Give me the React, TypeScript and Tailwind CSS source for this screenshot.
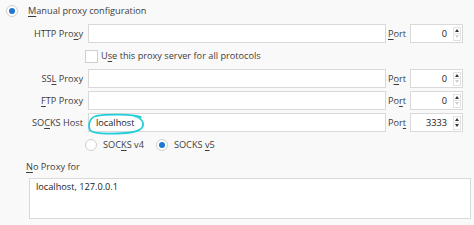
import React from 'react';

const U: React.FC<{ children: React.ReactNode }> = ({ children }) => <span className="underline underline-offset-2">{children}</span>;

const Radio: React.FC<{ checked?: boolean }> = ({ checked }) => (
  <span className="flex h-[12px] w-[12px] shrink-0 items-center justify-center rounded-full border border-[#cfcfcf] bg-white">
    {checked && <span className="h-[6px] w-[6px] rounded-full bg-[#1e78d0]" />}
  </span>
);

const Spinner: React.FC<{ downActive?: boolean }> = ({ downActive }) => (
  <div className="ml-[6px] flex h-[14px] w-[8px] flex-col border border-[#e2e2e2]">
    <div className="flex flex-1 items-center justify-center border-b border-[#e2e2e2]">
      <svg width="4" height="3" viewBox="0 0 4 3"><path d="M2 0L4 3H0z" fill="#333" /></svg>
    </div>
    <div className="flex flex-1 items-center justify-center">
      <svg width="4" height="3" viewBox="0 0 4 3"><path d="M0 0H4L2 3z" fill={downActive ? '#333' : '#cfcfcf'} /></svg>
    </div>
  </div>
);

interface ProxyRowProps {
  label: React.ReactNode;
  port: React.ReactNode;
  value?: string;
  portValue: string;
  downActive?: boolean;
  className?: string;
}

const ProxyRow: React.FC<ProxyRowProps> = ({ label, port, value, portValue, downActive, className }) => (
  <div className={`flex h-[19px] items-center ${className ?? ''}`}>
    <div className="w-[84px] pr-[1px] text-right">{label}</div>
    <div className="ml-[4px] flex h-full w-[298px] items-center border border-[#d9d9d9] bg-white pl-[7px] text-[#222]">
      {value}
    </div>
    <div className="ml-[2px] w-[22px]">{port}</div>
    <div className="flex h-full w-[53px] items-center justify-end border border-[#d9d9d9] bg-white pr-[1px] text-[#222]">
      <span>{portValue}</span>
      <Spinner downActive={downActive} />
    </div>
  </div>
);

export default function App() {
  return (
    <div className="relative h-[225px] w-[474px] overflow-hidden bg-[#f9f9f9] font-['Open_Sans',sans-serif] text-[9.2px] text-[#3d3d3d]">
      <div className="flex h-[22px] items-center pl-[6px]">
        <Radio checked />
        <span className="ml-[10px]"><U>M</U>anual proxy configuration</span>
      </div>

      <ProxyRow className="mt-[2px]" label={<>HTTP Pro<U>x</U>y</>} port={<><U>P</U>ort</>} portValue="0" />

      <div className="flex h-[26px] items-center pl-[85px]">
        <span className="h-[13px] w-[13px] border border-[#cfcfcf] bg-white" />
        <span className="ml-[3px]">U<U>s</U>e this proxy server for all protocols</span>
      </div>

      <ProxyRow label={<>SS<U>L</U> Proxy</>} port={<>P<U>o</U>rt</>} portValue="0" />
      <ProxyRow className="mt-[3px]" label={<><U>F</U>TP Proxy</>} port={<>Po<U>r</U>t</>} portValue="0" />
      <ProxyRow className="mt-[3px]" label={<>SO<U>C</U>KS Host</>} port={<>Por<U>t</U></>} value="localhost" portValue="3333" downActive />

      <div className="flex h-[26px] items-center pl-[85px]">
        <Radio />
        <span className="ml-[6px]">SOC<U>K</U>S v4</span>
        <span className="ml-[12px]"><Radio checked /></span>
        <span className="ml-[6px]">SOCKS <U>v</U>5</span>
      </div>

      <div className="flex h-[18px] items-center pl-[26px]">
        <span><U>N</U>o Proxy for</span>
      </div>
      <div className="ml-[29px] mt-[2px] h-[41px] w-[442px] border border-[#d9d9d9] bg-white px-[6px] pt-[1px] text-[#222]">
        localhost, 127.0.0.1
      </div>

      <svg className="pointer-events-none absolute left-[86px] top-[112px]" width="62" height="24" viewBox="0 0 62 24">
        <path
          d="M55 5 C47 2 20 2 10 4 C3 6 2 14 4 18 C7 22 25 22 40 21 C52 20 58 17 57 11 C56 7 52 5 48 4"
          fill="none"
          stroke="#24cfd9"
          strokeWidth="1.8"
          strokeLinecap="round"
        />
      </svg>
    </div>
  );
}
